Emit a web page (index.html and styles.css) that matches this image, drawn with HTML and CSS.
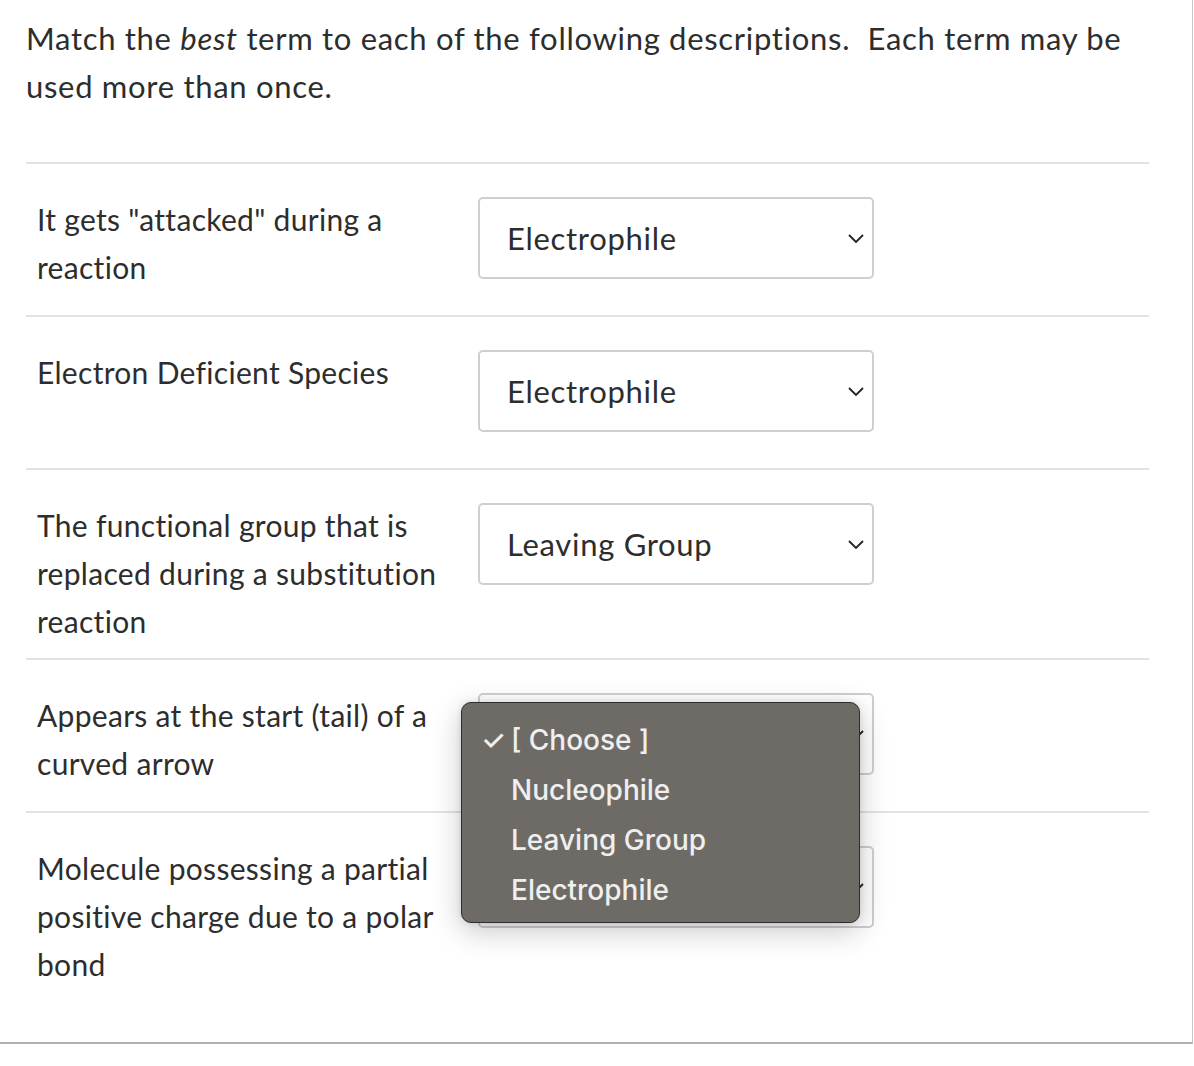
FILE: index.html
```html
<!DOCTYPE html>
<html>
<head>
<meta charset="utf-8">
<link rel="stylesheet" href="styles.css">
</head>
<body>
<div class="question">
  <p class="prompt">Match the <em>best</em> term to each of the following descriptions.&nbsp; Each term may be used more than once.</p>
  <div class="answers">
    <div class="row">
      <div class="desc">It gets "attacked" during a reaction</div>
      <div class="select"><span>Electrophile</span><svg class="chev" viewBox="0 0 16 9"><path d="M1 1 L8 8 L15 1"/></svg></div>
    </div>
    <div class="row">
      <div class="desc">Electron Deficient Species</div>
      <div class="select"><span>Electrophile</span><svg class="chev" viewBox="0 0 16 9"><path d="M1 1 L8 8 L15 1"/></svg></div>
    </div>
    <div class="row">
      <div class="desc">The functional group that is replaced during a substitution reaction</div>
      <div class="select"><span>Leaving Group</span><svg class="chev" viewBox="0 0 16 9"><path d="M1 1 L8 8 L15 1"/></svg></div>
    </div>
    <div class="row">
      <div class="desc">Appears at the start (tail) of a curved arrow</div>
      <div class="select open"><span class="hidden-value">[ Choose ]</span><svg class="chev" viewBox="0 0 16 9"><path d="M1 1 L8 8 L15 1"/></svg>
        <ul class="menu">
          <li class="checked"><span class="check">✓</span>[ Choose ]</li>
          <li>Nucleophile</li>
          <li>Leaving Group</li>
          <li>Electrophile</li>
        </ul>
      </div>
    </div>
    <div class="row">
      <div class="desc">Molecule possessing a partial positive charge due to a polar bond</div>
      <div class="select"><span class="hidden-value">[ Choose ]</span><svg class="chev" viewBox="0 0 16 9"><path d="M1 1 L8 8 L15 1"/></svg></div>
    </div>
  </div>
</div>
</body>
</html>
```
FILE: styles.css
```css
html, body {
  margin: 0;
  padding: 0;
  background: #fff;
}
body {
  font-family: Lato, "Liberation Sans", sans-serif;
  color: #2d2d2d;
  font-size: 30px;
  letter-spacing: 0.3px;
  line-height: 48px;
}
.question {
  width: 1193px;
  height: 1044px;
  box-sizing: border-box;
  border-right: 1px solid #c8c8c8;
  border-bottom: 2px solid #b0b0b0;
}
.prompt {
  margin: 0;
  padding: 14px 60px 0 26px;
  font-size: 31px;
  letter-spacing: 0.7px;
}
.prompt em {
  font-style: italic;
}
.answers {
  margin: 52px 43px 0 26px;
}
.row {
  border-top: 2px solid #e3e3e3;
  display: flex;
  align-items: flex-start;
  padding: 31px 0 13px 11px;
}
.desc {
  width: 412px;
  margin-right: 29px;
}
.select {
  position: relative;
  box-sizing: border-box;
  width: 396px;
  height: 82px;
  margin: 2px 0 23px;
  border: 2px solid #cfcfcf;
  border-radius: 5px;
  display: flex;
  align-items: center;
  justify-content: space-between;
  padding: 0 8px 0 27px;
  font-size: 31px;
  letter-spacing: 0.7px;
}
.chev {
  width: 16px;
  height: 9px;
  fill: none;
  stroke: #222;
  stroke-width: 1.8;
}
.menu {
  position: absolute;
  left: -19px;
  top: 7px;
  width: 399px;
  height: 221px;
  box-sizing: border-box;
  margin: 0;
  padding: 12px 0 0 0;
  list-style: none;
  background: #6e6b66;
  border: 1px solid #2e2d2b;
  border-radius: 10px;
  box-shadow: 0 8px 30px rgba(0, 0, 0, 0.22), 0 0 6px rgba(0, 0, 0, 0.12);
  font-family: Inter, "Open Sans", sans-serif;
  font-size: 28px;
  font-weight: 500;
  letter-spacing: 0;
  color: #efefef;
  line-height: 50px;
  z-index: 5;
}
.menu li {
  padding-left: 49px;
  position: relative;
}
.check {
  position: absolute;
  left: 19px;
  font-size: 28px;
}
```
